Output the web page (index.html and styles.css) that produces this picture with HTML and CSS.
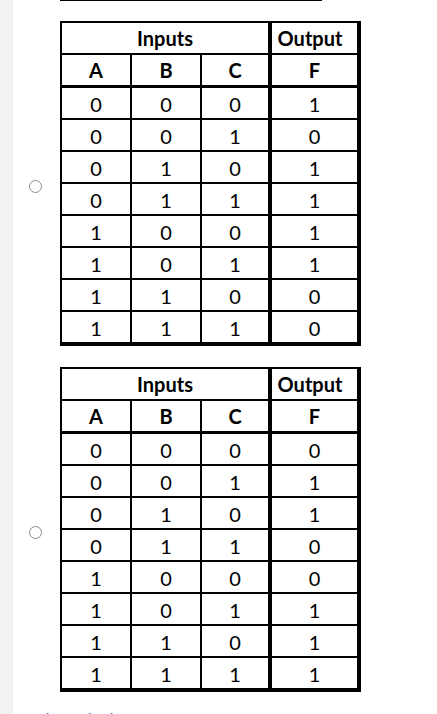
FILE: index.html
```html
<!DOCTYPE html>
<html>
<head>
<meta charset="utf-8">
<link rel="stylesheet" href="styles.css">
</head>
<body>
<div class="sidebar"></div>
<div class="main">
  <div class="topline"></div>
  <div class="option first">
    <span class="radio"></span>
    <table class="truth">
      <tr class="h1"><td colspan="3" class="hd sep">Inputs</td><td class="hd out last">Output</td></tr>
      <tr class="h2"><td class="hd ca">A</td><td class="hd cb">B</td><td class="hd cc sep">C</td><td class="hd cf last">F</td></tr>
      <tr><td>0</td><td>0</td><td class="sep">0</td><td class="last">1</td></tr>
      <tr><td>0</td><td>0</td><td class="sep">1</td><td class="last">0</td></tr>
      <tr><td>0</td><td>1</td><td class="sep">0</td><td class="last">1</td></tr>
      <tr><td>0</td><td>1</td><td class="sep">1</td><td class="last">1</td></tr>
      <tr><td>1</td><td>0</td><td class="sep">0</td><td class="last">1</td></tr>
      <tr><td>1</td><td>0</td><td class="sep">1</td><td class="last">1</td></tr>
      <tr><td>1</td><td>1</td><td class="sep">0</td><td class="last">0</td></tr>
      <tr class="end"><td>1</td><td>1</td><td class="sep">1</td><td class="last">0</td></tr>
    </table>
  </div>
  <div class="option">
    <span class="radio"></span>
    <table class="truth">
      <tr class="h1"><td colspan="3" class="hd sep">Inputs</td><td class="hd out last">Output</td></tr>
      <tr class="h2"><td class="hd ca">A</td><td class="hd cb">B</td><td class="hd cc sep">C</td><td class="hd cf last">F</td></tr>
      <tr><td>0</td><td>0</td><td class="sep">0</td><td class="last">0</td></tr>
      <tr><td>0</td><td>0</td><td class="sep">1</td><td class="last">1</td></tr>
      <tr><td>0</td><td>1</td><td class="sep">0</td><td class="last">1</td></tr>
      <tr><td>0</td><td>1</td><td class="sep">1</td><td class="last">0</td></tr>
      <tr><td>1</td><td>0</td><td class="sep">0</td><td class="last">0</td></tr>
      <tr><td>1</td><td>0</td><td class="sep">1</td><td class="last">1</td></tr>
      <tr><td>1</td><td>1</td><td class="sep">0</td><td class="last">1</td></tr>
      <tr class="end"><td>1</td><td>1</td><td class="sep">1</td><td class="last">1</td></tr>
    </table>
  </div>
  <a class="clear" href="#">Clear selection</a>
</div>
</body>
</html>
```

FILE: styles.css
```css
html, body {
  margin: 0;
  padding: 0;
  background: #ffffff;
}
body {
  display: flex;
  min-height: 714px;
  overflow: hidden;
  font-family: Lato, "Liberation Sans", sans-serif;
}
.sidebar {
  width: 13px;
  flex: none;
  background: #f2f2f2;
  min-height: 714px;
}
.main {
  flex: 1;
  display: flex;
  flex-direction: column;
}
.topline {
  margin-left: 47px;
  width: 262px;
  height: 1px;
  background: #000;
}
.option {
  display: flex;
  align-items: center;
  margin-top: 21px;
}
.option.first {
  margin-top: 20px;
}
.radio {
  box-sizing: border-box;
  width: 13px;
  height: 13px;
  border: 1px solid #8c8c8c;
  border-radius: 50%;
  background: #fff;
  margin-left: 16px;
  margin-right: 18px;
  margin-top: 5px;
  flex: none;
}
.truth {
  border-collapse: separate;
  border-spacing: 0;
  border-top: 2px solid #000;
  border-left: 2px solid #000;
  font-size: 20px;
  color: #000;
}
.truth td {
  box-sizing: border-box;
  padding: 3px 0 0 0;
  height: 32px;
  border-right: 2px solid #000;
  border-bottom: 2px solid #000;
  text-align: center;
  vertical-align: middle;
  line-height: 27px;
}
.truth td.sep,
.truth td.last {
  border-right-width: 4px;
}
.truth .h2 td {
  height: 33px;
  border-bottom-width: 3px;
}
.truth .end td {
  height: 34px;
  border-bottom-width: 4px;
}
.truth .hd {
  font-weight: 700;
  padding-top: 1px;
  line-height: 29px;
}
.truth .out {
  padding-right: 9px;
}
.ca { width: 70px; }
.cb { width: 70px; }
.cc { width: 70px; }
.cf { width: 89px; }
.clear {
  margin-top: 17px;
  margin-left: 23px;
  font-family: "Liberation Sans", Arial, sans-serif;
  font-size: 14px;
  line-height: 20px;
  color: #1a5fb4;
  text-decoration: none;
}
```
